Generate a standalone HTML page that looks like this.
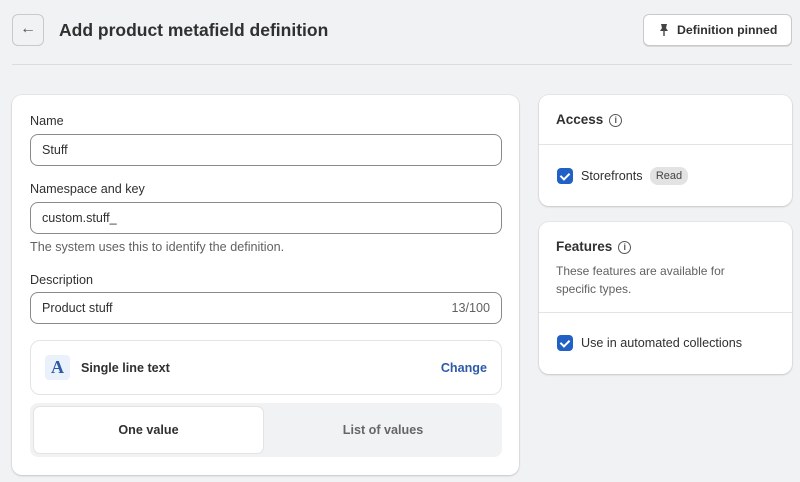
<!DOCTYPE html>
<html><head><style>
*{box-sizing:border-box;margin:0;padding:0}
body{width:800px;height:482px;background:#f1f2f4;font-family:"Liberation Sans",sans-serif;color:#303030;font-size:12.6px;position:relative;overflow:hidden}
.a{position:absolute}
.card{position:absolute;background:#fff;border-radius:10px;box-shadow:0 1px 2px rgba(0,0,0,.15),0 0 0 1px rgba(0,0,0,.04)}
.inp{position:absolute;left:18px;width:472px;height:32px;border:1px solid #8a8a8a;border-radius:8px;padding:0 11px;line-height:30px;font-size:12.6px;color:#303030}
.lbl{position:absolute;left:18px;font-size:12.6px}
.cb{position:absolute;width:16px;height:16px;background:#2160c4;border-radius:4px}
.cb:after{content:"";position:absolute;left:5px;top:3px;width:4px;height:7px;border:solid #fff;border-width:0 2px 2px 0;transform:rotate(45deg)}
.info{display:inline-block;width:13px;height:13px;border:1.3px solid #555;border-radius:50%;font-size:9px;line-height:11px;text-align:center;font-weight:bold;vertical-align:1px;margin-left:6px;color:#555}
b{font-weight:bold}
</style></head><body>
<div class="a" style="left:12px;top:14px;width:32px;height:32px;border:1px solid #c9c9c9;border-radius:6px;background:#f1f2f4;text-align:center;line-height:28px;font-size:16px;color:#555">←</div>
<div class="a" style="left:59px;top:20px;font-size:17.5px;font-weight:bold;color:#303030">Add product metafield definition</div>
<div class="a" style="left:643px;top:14px;width:149px;height:32px;border:1px solid #c9c9c9;border-radius:6px;background:#fff;font-size:12.3px;font-weight:bold;line-height:31px;padding-left:14px;box-shadow:0 1px 0 rgba(0,0,0,.1)"><svg width="12" height="13" viewBox="0 0 12 13" style="vertical-align:-2px;margin-right:7px"><path d="M3 1h6l-1 4 2 3H2l2-3z" fill="#444"/><rect x="5.3" y="8" width="1.4" height="5" fill="#444"/></svg>Definition pinned</div>
<div class="a" style="left:12px;top:64px;width:780px;height:1px;background:#dcdcdc"></div>

<div class="card" style="left:12px;top:95px;width:507px;height:380px">
<div class="lbl" style="top:19px">Name</div>
<div class="inp" style="top:39px">Stuff</div>
<div class="lbl" style="top:87px">Namespace and key</div>
<div class="inp" style="top:107px">custom.stuff_</div>
<div class="lbl" style="top:145px;color:#616161">The system uses this to identify the definition.</div>
<div class="lbl" style="top:178px">Description</div>
<div class="inp" style="top:197px">Product stuff<span style="float:right;color:#616161">13/100</span></div>
<div class="a" style="left:18px;top:245px;width:472px;height:55px;border:1px solid #e3e3e3;border-radius:10px">
<div class="a" style="left:14px;top:14px;width:25px;height:25px;background:#eaf1fb;border-radius:4px;color:#2d5aa8;font-family:'Liberation Serif',serif;font-size:18px;font-weight:bold;text-align:center;line-height:25px">A</div>
<div class="a" style="left:50px;top:20px;font-weight:bold">Single line text</div>
<div class="a" style="right:14px;top:20px;font-weight:bold;color:#2d5aa8">Change</div>
</div>
<div class="a" style="left:18px;top:308px;width:472px;height:54px;background:#f1f2f4;border-radius:8px">
<div class="a" style="left:4px;top:4px;width:229px;height:46px;background:#fff;border-radius:6px;box-shadow:0 0 0 1px #e3e3e3;text-align:center;line-height:46px;font-weight:bold">One value</div>
<div class="a" style="left:238px;top:4px;width:230px;height:46px;text-align:center;line-height:46px;font-weight:bold;color:#666">List of values</div>
</div>
</div>

<div class="card" style="left:539px;top:95px;width:253px;height:111px">
<div class="a" style="left:17px;top:17px;font-size:13.5px;font-weight:bold">Access<span class="info">i</span></div>
<div class="a" style="left:0;top:49px;width:253px;height:1px;background:#e3e3e3"></div>
<div class="cb" style="left:18px;top:73px"></div>
<div class="a" style="left:42px;top:74px">Storefronts</div>
<div class="a" style="left:111px;top:72px;width:38px;height:18px;background:#e3e3e3;border-radius:8px;font-size:11px;text-align:center;line-height:18px;color:#444">Read</div>
</div>

<div class="card" style="left:539px;top:222px;width:253px;height:152px">
<div class="a" style="left:17px;top:17px;font-size:13.5px;font-weight:bold">Features<span class="info">i</span></div>
<div class="a" style="left:17px;top:40px;font-size:12px;color:#616161;line-height:18px;width:195px">These features are available for specific types.</div>
<div class="a" style="left:0;top:90px;width:253px;height:1px;background:#e3e3e3"></div>
<div class="cb" style="left:18px;top:113px"></div>
<div class="a" style="left:42px;top:114px">Use in automated collections</div>
</div>
</body></html>
